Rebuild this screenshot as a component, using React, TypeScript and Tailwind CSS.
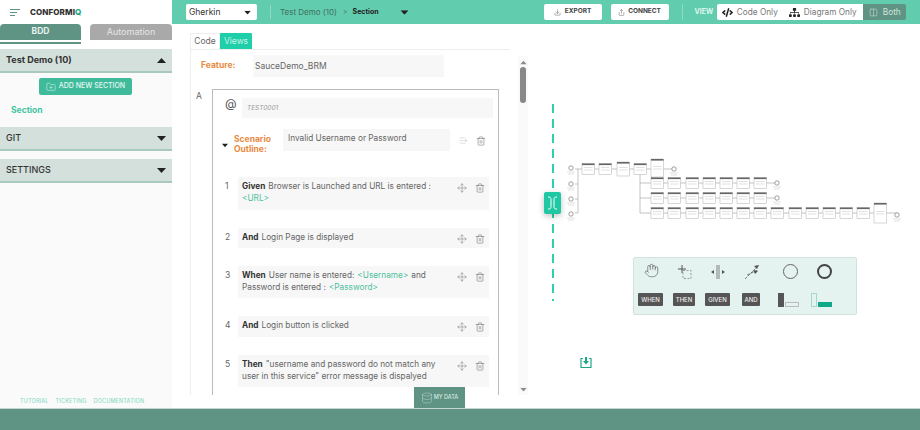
import React from 'react';
import { Database, Download, Hand, Move, Share, Trash2, Columns2, ListPlus, FolderPlus } from 'lucide-react';
import { FaCode, FaSitemap } from 'react-icons/fa';

const Tri = ({ up = false, className = '' }: { up?: boolean; className?: string }) => (
  <svg width="9" height="5" viewBox="0 0 9 5" className={className}>
    <path d={up ? 'M0 5 L4.5 0 L9 5 Z' : 'M0 0 L9 0 L4.5 5 Z'} fill="#222" />
  </svg>
);

function SideRow({ label, bold, up }: { label: string; bold?: boolean; up?: boolean }) {
  return (
    <div className="flex h-[24px] items-center justify-between border-b-2 border-[#a9c9bf] bg-[#d4e0dc] pl-[6px] pr-[6px]">
      <span className={`text-[9px] text-[#333] ${bold ? 'font-bold' : 'font-medium'}`}>{label}</span>
      <Tri up={up} />
    </div>
  );
}

function Step({ n, h, mt, children }: { n: number; h: string; mt: string; children: React.ReactNode }) {
  return (
    <div className={`flex ${mt}`}>
      <span className="w-[25px] shrink-0 pl-[12px] pt-[3px] text-[8.5px] text-[#666]">{n}</span>
      <div className={`flex w-[251px] justify-between bg-[#f7f7f7] pl-[4px] pr-[4px] ${h}`}>
        <div className="w-[200px] whitespace-nowrap pt-[3px] text-[8.25px] leading-[12px] text-[#666]">{children}</div>
        <div className="flex gap-[8px] pt-[6px]">
          <Move size={10} strokeWidth={1.2} className="text-[#777]" />
          <Trash2 size={10} strokeWidth={1.4} className="text-[#777]" />
        </div>
      </div>
    </div>
  );
}

const nodes: [number, number, number?][] = [
  [582, 169], [599, 169], [617, 169, 14], [634, 169], [651, 168, 18],
  ...[651, 668, 686, 703, 720, 737, 754].map((x) => [x, 183] as [number, number]),
  ...[651, 668, 686, 703, 720, 737, 754].map((x) => [x, 198] as [number, number]),
  ...[651, 668, 686, 703, 720, 737, 754, 771, 789, 806, 823, 840, 857].map((x) => [x, 213] as [number, number]),
  [874, 213, 20],
];

function Flow() {
  return (
    <svg width="345" height="70" viewBox="565 156 345 70" className="absolute left-[393px] top-[132px] blur-[0.4px]">
      <g stroke="#aaa" strokeWidth="0.7" fill="none">
        <path d="M575 169H674 M575 184H578 M575 199H578 M575 213H578 M578 169V213" />
        <path d="M640 169V213 M640 183H777 M640 198H777 M640 213H897" />
      </g>
      {nodes.map(([x, y, h = 11], i) => (
        <g key={i}>
          <rect x={x} y={y - h / 2} width="12.5" height={h} fill="#fff" stroke="#bbb" strokeWidth="0.6" />
          <rect x={x} y={y - h / 2} width="12.5" height="1.6" fill="#666" />
          <path d={`M${x + 2} ${y - 1.5}h8.5 M${x + 2} ${y + 1}h8.5`} stroke="#ccc" strokeWidth="0.6" />
        </g>
      ))}
      {[[571, 168], [571, 184], [571, 199], [571, 214], [674, 169], [777, 183], [777, 198], [897, 215]].map(([x, y], i) => (
        <g key={i}>
          <circle cx={x} cy={y} r="2.2" fill="#fff" stroke="#777" strokeWidth="0.7" />
          <path d={`M${x - 4} ${y + 4}h8 M${x - 3} ${y + 6}h6`} stroke="#ccc" strokeWidth="0.6" />
        </g>
      ))}
    </svg>
  );
}

function Palette() {
  const tag = 'flex h-[13px] items-center justify-center rounded-[1px] bg-[#555] text-[6px] font-medium text-[#eee]';
  return (
    <div className="absolute left-[461px] top-[233px] h-[58px] w-[224px] rounded-[2px] border border-[#cfe3dc] bg-[#e4f3ef]">
      <Hand size={15} strokeWidth={1} className="absolute left-[10px] top-[5px] text-[#555]" />
      <svg width="16" height="16" viewBox="0 0 16 16" className="absolute left-[42px] top-[6px]">
        <path d="M6 1v8M2 5h8" stroke="#555" strokeWidth="1" />
        <path d="M7 6.5h8v8H7z" fill="none" stroke="#777" strokeWidth="0.7" strokeDasharray="2 1.5" />
      </svg>
      <svg width="16" height="14" viewBox="0 0 16 14" className="absolute left-[76px] top-[7px]">
        <path d="M7 0v14M9 0v14" stroke="#555" strokeWidth="0.7" />
        <path d="M1 7l3-2v4zM15 7l-3-2v4z" fill="#555" />
      </svg>
      <svg width="16" height="16" viewBox="0 0 16 16" className="absolute left-[110px] top-[6px]">
        <path d="M1 15L15 1M3 11l11-5" stroke="#666" strokeWidth="0.8" strokeDasharray="3 1" fill="none" />
        <path d="M15 1l-5 1 3 3zM14 7l-5-1 2 4z" fill="#555" />
      </svg>
      <div className="absolute left-[149px] top-[6px] h-[15px] w-[15px] rounded-full border border-[#666]" />
      <div className="absolute left-[183px] top-[6px] h-[15px] w-[15px] rounded-full border-[2px] border-[#444]" />
      <div className={`${tag} absolute left-[4px] top-[35px] w-[25px]`}>WHEN</div>
      <div className={`${tag} absolute left-[39px] top-[35px] w-[22px]`}>THEN</div>
      <div className={`${tag} absolute left-[71px] top-[35px] w-[25px]`}>GIVEN</div>
      <div className={`${tag} absolute left-[108px] top-[35px] w-[18px]`}>AND</div>
      <div className="absolute left-[144px] top-[35px] h-[14px] w-[6px] bg-[#555]" />
      <div className="absolute left-[151px] top-[44px] h-[5px] w-[14px] border border-[#bbb]" />
      <div className="absolute left-[177px] top-[35px] h-[14px] w-[6px] border border-[#a5d8c8]" />
      <div className="absolute left-[184px] top-[44px] h-[5px] w-[14px] bg-[#0fa888]" />
    </div>
  );
}

export default function App() {
  return (
    <div className="relative flex h-[430px] w-[920px] flex-col overflow-hidden bg-white font-['Inter',sans-serif]">
      <div className="flex h-[408px]">
        {/* sidebar */}
        <aside className="flex w-[172px] shrink-0 flex-col bg-[#fafafa]">
          <div className="flex h-[24px] items-center gap-[10px] bg-white pl-[10px]">
            <div className="flex flex-col gap-[2px]">
              <div className="h-px w-[10px] bg-[#5f9484]" />
              <div className="h-px w-[7px] bg-[#5f9484]" />
              <div className="h-px w-[5px] bg-[#5f9484]" />
            </div>
            <span className="text-[8px] font-extrabold tracking-[0.1px] text-[#2f2f2f]">CONFORMI<span className="text-[#1fa67f]">Q</span></span>
          </div>
          <div className="flex h-[25px] justify-between bg-white">
            <div className="h-[18px] w-[81px] rounded-t-[4px] border-b-2 border-white bg-[#5f9484] text-center text-[8.5px] font-bold leading-[15px] text-[#e8f1ee] shadow-[0_2px_0_#5f9484]">BDD</div>
            <div className="h-[16px] w-[82px] rounded-t-[4px] bg-[#a9a9a9] text-center text-[9px] leading-[15px] text-[#e6e6e6]">Automation</div>
          </div>
          <SideRow label="Test Demo (10)" bold up />
          <button className="ml-[39px] mt-[5px] flex h-[17px] w-[93px] items-center justify-center gap-[3px] rounded-[2px] bg-[#3fbb9c] text-[7px] font-medium text-[#e9f8f3]">
            <FolderPlus size={10} strokeWidth={1.2} />
            ADD NEW SECTION
          </button>
          <div className="ml-[11px] mt-[9px] h-[23px] text-[8.5px] font-bold text-[#3fc3a0]">Section</div>
          <SideRow label="GIT" />
          <div className="h-[8px]" />
          <SideRow label="SETTINGS" />
          <div className="mt-auto flex gap-[7px] pb-[3px] pl-[20px] text-[5.5px] font-medium tracking-[0.15px] text-[#8fdcc8]">
            <span>TUTORIAL</span>
            <span>TICKETING</span>
            <span>DOCUMENTATION</span>
          </div>
        </aside>

        <div className="flex min-w-0 flex-1 flex-col">
          {/* top bar */}
          <header className="flex h-[24px] shrink-0 items-center bg-[#62cdae] pl-[14px]">
            <div className="flex h-[16px] w-[71px] items-center justify-between rounded-[2px] bg-white pl-[3px] pr-[5px] text-[8.5px] text-[#333]">
              Gherkin
              <Tri className="scale-75" />
            </div>
            <div className="ml-[13px] h-[14px] w-px bg-[#8edac3]" />
            <span className="ml-[9px] text-[8px] text-[#3f6f60]">Test Demo (10)</span>
            <span className="ml-[6px] text-[7px] text-[#3f6f60]">&gt;</span>
            <span className="ml-[5px] text-[7px] font-bold text-[#222]">Section</span>
            <Tri className="ml-[21px] scale-90" />
            <button className="ml-[135px] flex h-[16px] w-[58px] items-center justify-center gap-[4px] rounded-[2px] bg-white text-[6.5px] font-bold text-[#444]">
              <Download size={7} strokeWidth={1.4} />
              EXPORT
            </button>
            <button className="ml-[9px] flex h-[16px] w-[58px] items-center justify-center gap-[3px] rounded-[2px] bg-white text-[6.5px] font-bold text-[#444]">
              <Share size={7} strokeWidth={1.4} />
              CONNECT
            </button>
            <div className="ml-[13px] h-[16px] w-px bg-[#8edac3]" />
            <span className="ml-[12px] text-[7px] font-bold text-[#dff5ee]">VIEW</span>
            <div className="ml-[4px] flex h-[16px] w-[189px] overflow-hidden rounded-[2px] text-[8.25px]">
              <div className="flex w-[65px] items-center justify-center gap-[4px] bg-white text-[#777]">
                <FaCode size={11} className="text-[#222]" />
                Code Only
              </div>
              <div className="flex w-[81px] items-center justify-center gap-[4px] bg-white text-[#777]">
                <FaSitemap size={11} className="text-[#222]" />
                Diagram Only
              </div>
              <div className="flex w-[43px] items-center justify-center gap-[5px] bg-[#5f9484] text-[#cfe3dc]">
                <Columns2 size={9} strokeWidth={1.4} />
                Both
              </div>
            </div>
          </header>

          {/* canvas */}
          <main className="relative flex min-h-0 flex-1">
            <section className="ml-[18px] mt-[9px] w-[320px] shrink-0">
              <div className="flex h-[16px]">
                <div className="flex w-[30px] items-center justify-center border border-b-0 border-[#eee] text-[8.5px] text-[#666]">Code</div>
                <div className="flex w-[32px] items-center justify-center rounded-t-[1px] bg-[#1fcfa9] text-[8.5px] text-[#c9f3e8]">Views</div>
              </div>
              <div className="h-[346px] overflow-hidden border-l border-t border-[#eee]">
                <div className="mt-[5px] flex">
                  <span className="ml-[10px] mt-[4px] w-[52px] text-[8.5px] font-bold text-[#e98a3f]">Feature:</span>
                  <div className="h-[22px] w-[191px] bg-[#f7f7f7] pl-[2px] text-[8.5px] leading-[22px] text-[#666]">SauceDemo_BRM</div>
                </div>
                <div className="mt-[12px] flex">
                  <span className="ml-[5px] mt-[1px] w-[16px] text-[8.5px] text-[#666]">A</span>
                  <div className="h-[330px] w-[287px] border border-b-0 border-[#bbb]">
                    <div className="mt-[8px] flex items-start">
                      <span className="ml-[12px] w-[17px] text-[12px] leading-[12px] text-[#555]">@</span>
                      <div className="h-[20px] w-[251px] bg-[#f7f7f7] pl-[5px] text-[6.5px] italic leading-[20px] text-[#999]">TEST0001</div>
                    </div>
                    <div className="mt-[11px] flex">
                      <Tri className="ml-[9px] mt-[14px] w-[6px]" />
                      <span className="ml-[6px] w-[49px] pt-[5px] text-[8.5px] font-bold leading-[10px] text-[#e98a3f]">Scenario Outline:</span>
                      <div className="h-[22px] w-[167px] bg-[#f7f7f7] pl-[5px] pt-[3px] text-[8.25px] text-[#666]">Invalid Username or Password</div>
                      <div className="ml-[9px] flex gap-[8px] pt-[7px]">
                        <ListPlus size={9} strokeWidth={1} className="text-[#aaa]" />
                        <Trash2 size={10} strokeWidth={1.4} className="text-[#777]" />
                      </div>
                    </div>
                    <Step n={1} h="h-[33px]" mt="mt-[23px]">
                      <div className="flex gap-[3px]"><b className="text-[#333]">Given</b><span>Browser is Launched and URL is entered :</span></div>
                      <div className="text-[#4fbf9f]">&lt;URL&gt;</div>
                    </Step>
                    <Step n={2} h="h-[20px]" mt="mt-[18px]">
                      <div className="flex gap-[3px]"><b className="text-[#333]">And</b><span>Login Page is displayed</span></div>
                    </Step>
                    <Step n={3} h="h-[32px]" mt="mt-[18px]">
                      <div className="flex gap-[3px]"><b className="text-[#333]">When</b><span>User name is entered:</span><span className="text-[#4fbf9f]">&lt;Username&gt;</span><span>and</span></div>
                      <div className="flex gap-[3px]"><span>Password is entered :</span><span className="text-[#4fbf9f]">&lt;Password&gt;</span></div>
                    </Step>
                    <Step n={4} h="h-[21px]" mt="mt-[18px]">
                      <div className="flex gap-[3px]"><b className="text-[#333]">And</b><span>Login button is clicked</span></div>
                    </Step>
                    <Step n={5} h="h-[32px]" mt="mt-[18px]">
                      <div className="flex gap-[3px]"><b className="text-[#333]">Then</b><span>"username and password do not match any</span></div>
                      <div>user in this service" error message is dispalyed</div>
                    </Step>
                  </div>
                </div>
              </div>
            </section>

            {/* scrollbar */}
            <div className="ml-[8px] mt-[32px] flex h-[339px] w-[10px] flex-col items-center bg-[#fafafa]">
              <Tri up className="mt-[4px] scale-75 opacity-50" />
              <div className="mt-[2px] h-[36px] w-[6px] rounded-[3px] bg-[#888]" />
              <Tri className="mt-auto mb-[3px] scale-75 opacity-50" />
            </div>

            {/* diagram side */}
            <svg width="2" height="197" className="absolute left-[380px] top-[80px]">
              <line x1="1" y1="0" x2="1" y2="197" stroke="#2fd0ad" strokeWidth="2" strokeDasharray="9 6" />
            </svg>
            <div className="absolute left-[372px] top-[168px] flex h-[22px] w-[17px] items-center justify-center rounded-[2px] bg-[#1fc7a3] shadow-[0_2px_6px_rgba(0,0,0,0.25)]">
              <svg width="11" height="14" viewBox="0 0 11 14">
                <path d="M1 1c3 0 3 1 3 3v6c0 2 0 3-3 3M10 1c-3 0-3 1-3 3v6c0 2 0 3 3 3" fill="none" stroke="#fff" strokeWidth="1" />
              </svg>
            </div>
            <Flow />
            <Palette />
            <svg width="12" height="11" viewBox="0 0 12 11" className="absolute left-[408px] top-[333px]">
              <path d="M3 1.5H1v9h10v-9H9" fill="none" stroke="#1fa888" strokeWidth="1.2" />
              <path d="M5 0h2v4h2L6 7.5 3 4h2z" fill="#1fa888" />
            </svg>
          </main>
        </div>
      </div>

      <footer className="h-[22px] shrink-0 border-t border-[#c5d6d0] bg-[#5f9484]" />
      <div className="absolute left-[414px] top-[387px] flex h-[21px] w-[51px] items-center justify-center gap-[1px] bg-[#5f9484] text-[5.5px] font-medium text-[#d5e6e0]">
        <Database size={12} strokeWidth={0.8} />
        MY DATA
      </div>
    </div>
  );
}
